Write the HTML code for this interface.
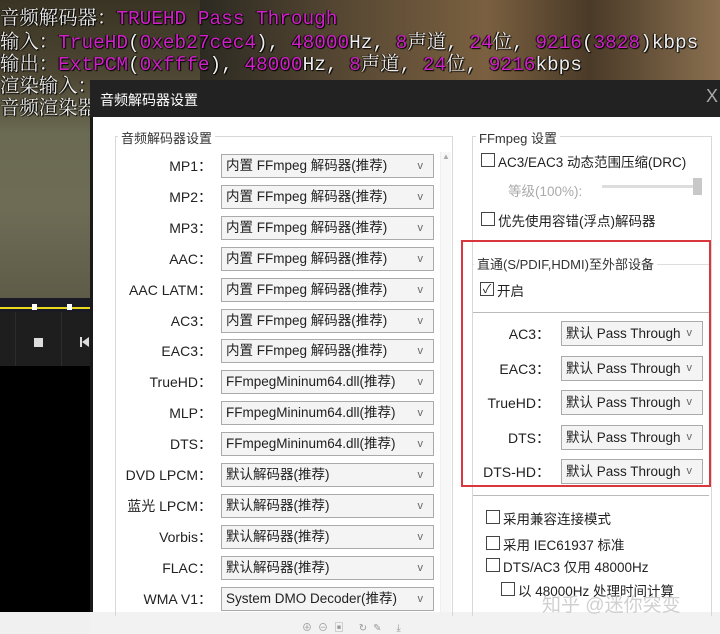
<!DOCTYPE html>
<html><head><meta charset="utf-8"><style>
*{margin:0;padding:0;box-sizing:border-box}
body{width:720px;height:634px;overflow:hidden;position:relative;background:#000;font-family:"Liberation Sans","Noto Sans CJK SC",sans-serif;font-size:13px;color:#222}
.abs{position:absolute}
.vid{left:0;top:0;width:720px;height:298px;background:linear-gradient(180deg,#3a3424 0%,#4d4633 25%,#6b6a52 45%,#6e6c55 70%,#5e5c48 100%)}
.vid2{left:200px;top:0;width:520px;height:84px;background:linear-gradient(90deg,#2c2a22 0%,#5a4a34 30%,#7a6040 55%,#4a3a28 75%,#8a7050 100%)}
.ov{font-family:"Liberation Mono","Noto Serif CJK SC",monospace;font-size:19.4px;color:#eee;white-space:nowrap;line-height:22px;text-shadow:1px 1px 1px #000,-1px 0 1px #000}
.m{color:#d020c8}
.dlg{left:90px;top:80px;width:630px;height:532px;background:#fff;border-left:3px solid #1a1a1a}
.tb{left:90px;top:80px;width:630px;height:37px;background:#222;color:#fff;font-size:14px;padding:10px 0 0 10px}
.grp{border:1px solid #d8d8d8}
.gl{background:#fff;color:#333;font-size:13px;padding:0 3px}
.lbl{width:100px;text-align:right;font-size:14px;color:#222;line-height:18px}
.cb{height:24px;border:1px solid #aaa;background:#f4f4f4;font-size:13.5px;padding:0 4px;line-height:22px;color:#222;white-space:nowrap}
.cb:after{content:"v";position:absolute;right:10px;top:0;line-height:22px;font-size:11px;color:#666}
.chk{width:14px;height:14px;border:1px solid #444;background:#fff}
.red{border:2px solid #d9363e;left:461px;top:240px;width:250px;height:247px}
</style></head><body>
<div class="abs vid"></div>
<div class="abs vid2"></div>
<div class="abs" style="left:0;top:298px;width:90px;height:14px;background:#1a1a24"></div>
<div class="abs" style="left:0;top:307px;width:90px;height:2px;background:#e8d820"></div>
<div class="abs" style="left:32px;top:304px;width:5px;height:6px;background:#fff"></div>
<div class="abs" style="left:67px;top:304px;width:5px;height:6px;background:#fff"></div>
<div class="abs" style="left:0;top:312px;width:90px;height:54px;background:#1e1e1e"></div>
<div class="abs" style="left:15px;top:312px;width:1px;height:54px;background:#2c2c2c"></div>
<div class="abs" style="left:61px;top:312px;width:1px;height:54px;background:#2c2c2c"></div>
<div class="abs" style="left:34px;top:338px;width:9px;height:9px;background:#ddd"></div>
<div class="abs" style="left:80px;top:337px;width:2px;height:10px;background:#ddd"></div>
<div class="abs" style="left:82px;top:337px;width:0;height:0;border-top:5px solid transparent;border-bottom:5px solid transparent;border-right:7px solid #ddd"></div>

<div class="abs ov" style="left:0;top:8px">音频解码器：<span class="m">TRUEHD Pass Through</span></div>
<div class="abs ov" style="left:0;top:32px">输入：<span class="m">TrueHD</span>(<span class="m">0xeb27cec4</span>), <span class="m">48000</span>Hz, <span class="m">8</span>声道, <span class="m">24</span>位, <span class="m">9216</span>(<span class="m">3828</span>)kbps</div>
<div class="abs ov" style="left:0;top:54px">输出：<span class="m">ExtPCM</span>(<span class="m">0xfffe</span>), <span class="m">48000</span>Hz, <span class="m">8</span>声道, <span class="m">24</span>位, <span class="m">9216</span>kbps</div>
<div class="abs ov" style="left:0;top:76px">渲染输入：</div>
<div class="abs ov" style="left:0;top:98px">音频渲染器</div>

<div class="abs dlg"></div>
<div class="abs tb">音频解码器设置<span style="position:absolute;right:2px;top:6px;font-size:18px;color:#aaa">X</span></div>
<div class="abs" style="left:90px;top:612px;width:630px;height:22px;background:#f2f2f2"></div>
<div class="abs" style="left:0;top:612px;width:90px;height:22px;background:#f0f0f0"></div>
<div class="abs" style="left:302px;top:619px;font-size:10px;color:#999;letter-spacing:6px">⊕⊖▣ ↻✎ ⤓</div>

<div class="abs grp" style="left:115px;top:136px;width:338px;height:480px;border-bottom:none"></div>
<div class="abs gl" style="left:118px;top:128px">音频解码器设置</div>
<div class="abs" style="left:440px;top:152px;width:11px;height:460px;background:#f7f7f7;border-left:1px solid #eee;color:#aaa;font-size:8px;text-align:center">▲</div>

<div id="L"></div>

<div class="abs grp" style="left:472px;top:136px;width:240px;height:480px;border-bottom:none"></div>
<div class="abs gl" style="left:476px;top:128px">FFmpeg 设置</div>
<div class="abs chk" style="left:481px;top:153px"></div>
<div class="abs" style="left:498px;top:151px;font-size:13.5px">AC3/EAC3 动态范围压缩(DRC)</div>
<div class="abs" style="left:508px;top:180px;font-size:13.5px;color:#aaa">等级(100%):</div>
<div class="abs" style="left:602px;top:185px;width:100px;height:3px;background:#ddd"></div>
<div class="abs" style="left:693px;top:178px;width:9px;height:17px;background:#c8c8c8"></div>
<div class="abs chk" style="left:481px;top:212px"></div>
<div class="abs" style="left:498px;top:210px;font-size:13.5px">优先使用容错(浮点)解码器</div>

<div class="abs red"></div>
<div class="abs" style="left:473px;top:264px;width:236px;height:1px;background:#ddd"></div>
<div class="abs gl" style="left:474px;top:254px">直通(S/PDIF,HDMI)至外部设备</div>
<div class="abs chk" style="left:480px;top:282px;font-size:12px;line-height:12px;text-align:center">✓</div>
<div class="abs" style="left:497px;top:280px;font-size:13.5px">开启</div>
<div class="abs" style="left:473px;top:312px;width:236px;height:1px;background:#bbb"></div>

<div class="abs" style="left:473px;top:495px;width:236px;height:1px;background:#bbb"></div>
<div class="abs chk" style="left:486px;top:510px"></div>
<div class="abs" style="left:503px;top:508px;font-size:13.5px">采用兼容连接模式</div>
<div class="abs chk" style="left:486px;top:536px"></div>
<div class="abs" style="left:503px;top:534px;font-size:13.5px">采用 IEC61937 标准</div>
<div class="abs chk" style="left:486px;top:558px"></div>
<div class="abs" style="left:503px;top:556px;font-size:13.5px">DTS/AC3 仅用 48000Hz</div>
<div class="abs chk" style="left:501px;top:582px"></div>
<div class="abs" style="left:518px;top:580px;font-size:13.5px">以 48000Hz 处理时间计算</div>
<div class="abs" style="left:542px;top:590px;font-size:19px;color:rgba(200,200,200,0.85)">知乎 @迷你突变</div>

<script>
var rows=[["MP1","内置 FFmpeg 解码器(推荐)"],["MP2","内置 FFmpeg 解码器(推荐)"],["MP3","内置 FFmpeg 解码器(推荐)"],["AAC","内置 FFmpeg 解码器(推荐)"],["AAC LATM","内置 FFmpeg 解码器(推荐)"],["AC3","内置 FFmpeg 解码器(推荐)"],["EAC3","内置 FFmpeg 解码器(推荐)"],["TrueHD","FFmpegMininum64.dll(推荐)"],["MLP","FFmpegMininum64.dll(推荐)"],["DTS","FFmpegMininum64.dll(推荐)"],["DVD LPCM","默认解码器(推荐)"],["蓝光 LPCM","默认解码器(推荐)"],["Vorbis","默认解码器(推荐)"],["FLAC","默认解码器(推荐)"],["WMA V1","System DMO Decoder(推荐)"]];
var h="";
rows.forEach(function(r,i){var y=154+i*30.9;
h+='<div class="abs lbl" style="left:112px;top:'+(y+3)+'px">'+r[0]+'：</div>';
h+='<div class="abs cb" style="left:221px;top:'+y+'px;width:213px">'+r[1]+'</div>';});
var r2=["AC3","EAC3","TrueHD","DTS","DTS-HD"];
r2.forEach(function(r,i){var y=321+i*34.6;
h+='<div class="abs lbl" style="left:450px;top:'+(y+4)+'px">'+r+'：</div>';
h+='<div class="abs cb" style="left:561px;top:'+y+'px;width:142px;height:25px;line-height:23px">默认 Pass Through</div>';});
document.getElementById("L").innerHTML=h;
</script>
</body></html>
